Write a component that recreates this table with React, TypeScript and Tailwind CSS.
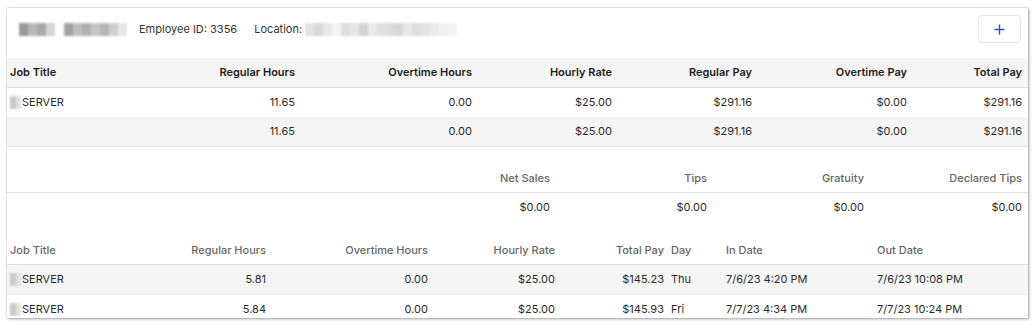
import React from "react";

const font = { fontFamily: "Inter, 'Noto Sans', sans-serif" };

function Blur({ shades, className }: { shades: string[]; className?: string }) {
  return (
    <div className={`flex h-[13px] blur-[1px] ${className ?? ""}`}>
      {shades.map((shade, index) => (
        <div key={index} className="h-full w-[9px]" style={{ backgroundColor: shade }} />
      ))}
    </div>
  );
}

const jobRows = [
  { hours: "11.65", ot: "0.00", rate: "$25.00", reg: "$291.16", otPay: "$0.00", total: "$291.16", title: true },
  { hours: "11.65", ot: "0.00", rate: "$25.00", reg: "$291.16", otPay: "$0.00", total: "$291.16", title: false },
];

const shifts = [
  { hours: "5.81", ot: "0.00", rate: "$25.00", total: "$145.23", day: "Thu", inDate: "7/6/23 4:20 PM", outDate: "7/6/23 10:08 PM" },
  { hours: "5.84", ot: "0.00", rate: "$25.00", total: "$145.93", day: "Fri", inDate: "7/7/23 4:34 PM", outDate: "7/7/23 10:24 PM" },
];

const grid1 = "grid grid-cols-[134px_151px_177px_140px_140px_155px_115px] items-center pl-[3px]";
const grid2 = "grid grid-cols-[383px_157px_157px_157px_158px] items-center pl-[3px]";
const grid3 = "grid grid-cols-[119px_137px_162px_127px_109px_55px_151px_1fr] items-center pl-[3px]";

function JobCell() {
  return (
    <div className="flex items-center gap-[1px]">
      <Blur shades={["#c9c9c9", "#e2e2e2"]} className="w-[11px] overflow-hidden" />
      <span>SERVER</span>
    </div>
  );
}

export default function App() {
  return (
    <div className="h-[328px] w-[1036px] bg-white pl-[7px] pt-[8px] text-[11px] text-[#2b2b2b]" style={font}>
      <div className="h-[310px] w-[1021px] overflow-hidden bg-white shadow-[1px_1px_3px_rgba(0,0,0,0.35),0_0_1px_rgba(0,0,0,0.35)]">
        <div className="flex items-center pb-[15px] pr-[7px] pt-[7px]">
          <Blur
            shades={["#9a9a9a", "#b8b8b8", "#a9a9a9", "#d6d6d6", "#ffffff", "#a2a2a2", "#bdbdbd", "#b1b1b1", "#c4c4c4", "#b6b6b6", "#cfcfcf", "#e5e5e5"]}
            className="ml-[12px] w-[108px] overflow-hidden"
          />
          <span className="ml-[12px] text-[#333]">Employee ID: 3356</span>
          <span className="ml-[17px] text-[#333]">Location:</span>
          <Blur
            shades={["#e4e4e4", "#d9d9d9", "#e8e8e8", "#f4f4f4", "#dedede", "#e6e6e6", "#d3d3d3", "#e9e9e9", "#e1e1e1", "#dcdcdc", "#d8d8d8", "#e7e7e7", "#dedede", "#e3e3e3", "#eaeaea", "#f0f0f0", "#f3f3f3"]}
            className="ml-[3px] w-[152px] overflow-hidden"
          />
          <button className="ml-auto flex h-[28px] w-[43px] items-center justify-center rounded-[4px] border border-[#e4e4e4] bg-white">
            <svg width="11" height="11" viewBox="0 0 11 11" fill="none" stroke="#2d4fc9" strokeWidth="1.4">
              <path d="M5.5 0.5v10M0.5 5.5h10" />
            </svg>
          </button>
        </div>

        <div className={`${grid1} h-[30px] border-b border-[#e1e1e1] bg-[#f5f5f5] font-semibold text-[#1c1c1c]`}>
          <div>Job Title</div>
          <div className="text-right">Regular Hours</div>
          <div className="text-right">Overtime Hours</div>
          <div className="text-right">Hourly Rate</div>
          <div className="text-right">Regular Pay</div>
          <div className="text-right">Overtime Pay</div>
          <div className="text-right">Total Pay</div>
        </div>
        {jobRows.map((row, index) => (
          <div
            key={index}
            className={`${grid1} ${index === 1 ? "h-[30px] border-b border-[#e1e1e1] bg-[#f5f5f5]" : "h-[29px]"}`}
          >
            <div>{row.title ? <JobCell /> : null}</div>
            <div className="text-right">{row.hours}</div>
            <div className="text-right">{row.ot}</div>
            <div className="text-right">{row.rate}</div>
            <div className="text-right">{row.reg}</div>
            <div className="text-right">{row.otPay}</div>
            <div className="text-right">{row.total}</div>
          </div>
        ))}

        <div className={`${grid2} mt-[17px] h-[29px] border-b border-[#e1e1e1] font-medium text-[#666]`}>
          <div />
          <div className="text-right">Net Sales</div>
          <div className="text-right">Tips</div>
          <div className="text-right">Gratuity</div>
          <div className="text-right">Declared Tips</div>
        </div>
        <div className={`${grid2} h-[28px]`}>
          <div />
          <div className="text-right">$0.00</div>
          <div className="text-right">$0.00</div>
          <div className="text-right">$0.00</div>
          <div className="text-right">$0.00</div>
        </div>

        <div className={`${grid3} mt-[15px] h-[29px] border-b border-[#e1e1e1] font-medium text-[#666]`}>
          <div>Job Title</div>
          <div className="text-right">Regular Hours</div>
          <div className="text-right">Overtime Hours</div>
          <div className="text-right">Hourly Rate</div>
          <div className="text-right">Total Pay</div>
          <div className="pl-[7px]">Day</div>
          <div className="pl-[7px]">In Date</div>
          <div className="pl-[7px]">Out Date</div>
        </div>
        {shifts.map((shift, index) => (
          <div
            key={index}
            className={`${grid3} ${index === 0 ? "h-[30px] border-b border-[#ececec] bg-[#f5f5f5]" : "h-[28px]"}`}
          >
            <JobCell />
            <div className="text-right">{shift.hours}</div>
            <div className="text-right">{shift.ot}</div>
            <div className="text-right">{shift.rate}</div>
            <div className="text-right">{shift.total}</div>
            <div className="pl-[7px]">{shift.day}</div>
            <div className="pl-[7px]">{shift.inDate}</div>
            <div className="pl-[7px]">{shift.outDate}</div>
          </div>
        ))}
      </div>
    </div>
  );
}
